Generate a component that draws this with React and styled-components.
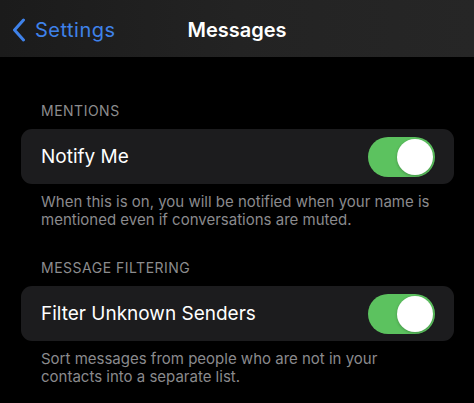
import React from "react";
import styled, { createGlobalStyle } from "styled-components";

const Global = createGlobalStyle`
  html, body { margin: 0; padding: 0; background: #000; }
  body { font-family: Inter, "Noto Sans", "Liberation Sans", sans-serif; -webkit-font-smoothing: antialiased; }
`;

const Page = styled.div`
  width: 474px;
  height: 403px;
  background: #000;
  overflow: hidden;
`;

const NavBar = styled.header`
  height: 57px;
  box-sizing: border-box;
  padding-top: 3px;
  display: grid;
  grid-template-columns: 1fr auto 1fr;
  align-items: center;
  background: linear-gradient(90deg, #1b1b1b 0%, #232323 50%, #262626 100%);
`;

const BackButton = styled.div`
  display: flex;
  align-items: center;
  gap: 9px;
  padding-left: 12px;
  color: #3f82ea;
  font-size: 20px;
  letter-spacing: 0.5px;
`;

const Title = styled.div`
  color: #fff;
  font-size: 20px;
  font-weight: 600;
`;

const Content = styled.main`
  padding: 45px 20px 0 21px;
  display: flex;
  flex-direction: column;
`;

const Section = styled.section`
  display: flex;
  flex-direction: column;
  margin-bottom: ${(p) => p.$gap || 0}px;
`;

const SectionLabel = styled.div`
  color: #8c8c8e;
  font-size: 14px;
  line-height: 18px;
  letter-spacing: 0.5px;
  padding-left: 20px;
  margin-bottom: 9px;
  text-transform: uppercase;
`;

const Card = styled.div`
  background: #1c1c1e;
  border-radius: 11px;
  height: 55px;
  display: flex;
  align-items: center;
  justify-content: space-between;
  padding: 0 19px 0 20px;
`;

const RowLabel = styled.div`
  color: #fff;
  font-size: 19px;
`;

const Toggle = styled.div`
  width: 67px;
  height: 40px;
  border-radius: 20px;
  background: #5cc25f;
  display: flex;
  align-items: center;
  justify-content: flex-end;
  padding: 2px;
  box-sizing: border-box;
`;

const Knob = styled.div`
  width: 36px;
  height: 36px;
  border-radius: 50%;
  background: #fff;
  box-shadow: 0 1px 3px rgba(0, 0, 0, 0.25);
`;

const Footer = styled.p`
  margin: 0;
  padding: 9px 20px 0 20px;
  color: #8a8a8d;
  font-size: 15px;
  line-height: 18px;
`;

const Chevron = () => (
  <svg width="14" height="24" viewBox="0 0 14 24" fill="none">
    <path d="M11.5 2 L2.5 12 L11.5 22" stroke="#3f82ea" strokeWidth="3" strokeLinecap="round" strokeLinejoin="round" />
  </svg>
);

const Row = ({ label }) => (
  <Card>
    <RowLabel>{label}</RowLabel>
    <Toggle>
      <Knob />
    </Toggle>
  </Card>
);

export default function App() {
  return (
    <Page>
      <Global />
      <NavBar>
        <BackButton>
          <Chevron />
          <span>Settings</span>
        </BackButton>
        <Title>Messages</Title>
        <div />
      </NavBar>
      <Content>
        <Section $gap={30}>
          <SectionLabel>Mentions</SectionLabel>
          <Row label="Notify Me" />
          <Footer>
            When this is on, you will be notified when your name is mentioned even if conversations are muted.
          </Footer>
        </Section>
        <Section>
          <SectionLabel>Message Filtering</SectionLabel>
          <Row label="Filter Unknown Senders" />
          <Footer>
            Sort messages from people who are not in your contacts into a separate list.
          </Footer>
        </Section>
      </Content>
    </Page>
  );
}
